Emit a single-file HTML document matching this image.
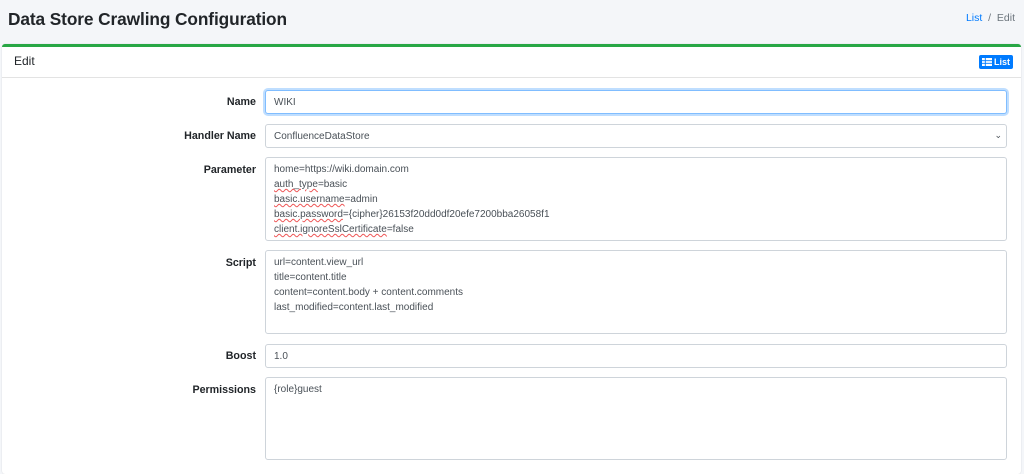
<!DOCTYPE html>
<html><head><style>
*{box-sizing:border-box;margin:0;padding:0}
body{width:1024px;height:468px;overflow:hidden;background:#f4f6f9;font-family:"Liberation Sans",sans-serif;color:#212529;position:relative}
h1{position:absolute;left:8px;top:9px;font-size:17.3px;font-weight:bold;letter-spacing:-.1px}
.bc{position:absolute;right:9px;top:12px;font-size:10.5px;color:#6c757d}
.bc a{color:#007bff}
.card{position:absolute;left:2px;top:44px;width:1019px;height:430px;background:#fff;border-top:3px solid #28a745;border-radius:3px;box-shadow:0 0 1px rgba(0,0,0,.2)}
.ch{height:31px;border-bottom:1px solid #e3e3e3;font-size:12px;padding:7px 12px}
.btn{position:absolute;right:8px;top:8px;background:#007bff;color:#fff;font-size:9px;font-weight:bold;padding:2px 3px;border-radius:2px;display:flex;align-items:center;gap:2px;height:14px}
.lbl{position:absolute;right:768px;font-size:10.7px;font-weight:bold;text-align:right}
.f{position:absolute;left:265px;width:742px;border:1px solid #ced4da;border-radius:3px;font-size:10px;padding:4px 8px;line-height:15px;color:#495057;background:#fff}
.sq{text-decoration:underline wavy #e55;text-decoration-thickness:1px}
</style></head><body>
<h1>Data Store Crawling Configuration</h1>
<div class="bc"><a>List</a> &nbsp;/&nbsp; Edit</div>
<div class="card"><div class="ch">Edit</div>
<div class="btn"><svg width="10" height="8" viewBox="0 0 10 8"><rect x="0" y="0" width="10" height="8" fill="#fff"/><path d="M0 2.7H10M0 5.3H10M3.3 0V8" stroke="#007bff" stroke-width=".9"/></svg>List</div>
</div>
<div class="lbl" style="top:96px">Name</div>
<div class="f" style="top:90px;height:24px;border-color:#80bdff;box-shadow:0 0 0 2px rgba(0,123,255,.25)">WIKI</div>
<div class="lbl" style="top:130px">Handler Name</div>
<div class="f" style="top:124px;height:24px">ConfluenceDataStore<span style="position:absolute;right:4px;top:3px;font-size:9px">&#8964;</span></div>
<div class="lbl" style="top:164px">Parameter</div>
<div class="f" style="top:157px;height:84px">home=https://wiki.domain.com<br><span class="sq">auth_type</span>=basic<br><span class="sq">basic.username</span>=admin<br><span class="sq">basic.password</span>={cipher}26153f20dd0df20efe7200bba26058f1<br><span class="sq">client.ignoreSslCertificate</span>=false</div>
<div class="lbl" style="top:257px">Script</div>
<div class="f" style="top:250px;height:84px">url=content.view_url<br>title=content.title<br>content=content.body + content.comments<br>last_modified=content.last_modified</div>
<div class="lbl" style="top:350px">Boost</div>
<div class="f" style="top:344px;height:24px">1.0</div>
<div class="lbl" style="top:384px">Permissions</div>
<div class="f" style="top:377px;height:83px">{role}guest</div>
</body></html>
